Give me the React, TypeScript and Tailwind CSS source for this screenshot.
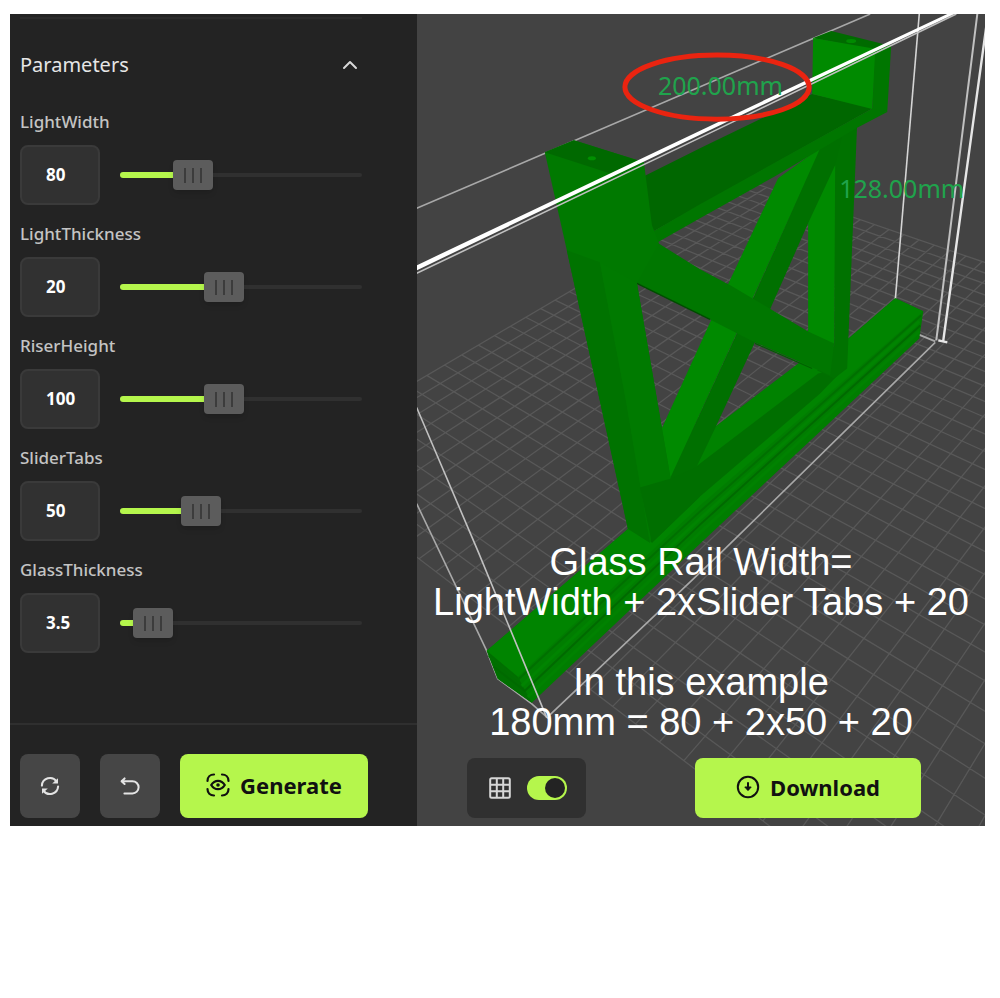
import { useState } from "react";
import { ChevronUp } from "lucide-react";

type Parameter = {
  name: string;
  value: number;
  min: number;
  max: number;
  step: number;
};

const defaultParameters: Parameter[] = [
  { name: "LightWidth", value: 80, min: 30, max: 220, step: 1 },
  { name: "LightThickness", value: 20, min: 10, max: 34, step: 1 },
  { name: "RiserHeight", value: 100, min: 50, max: 170, step: 1 },
  { name: "SliderTabs", value: 50, min: 20, max: 120, step: 1 },
  { name: "GlassThickness", value: 3.5, min: 3, max: 11, step: 0.5 },
];

const RefreshIcon = () => (
  <svg viewBox="0 0 20 20" className="size-5" fill="none" stroke="#e4e4e4" strokeWidth="2">
    <path d="M1.9 9.6A8.1 8.1 0 0 1 16.6 5.4" strokeLinecap="round" />
    <path d="M18.1 10.4A8.1 8.1 0 0 1 3.4 14.6" strokeLinecap="round" />
    <path d="M18 2.2V7.6H12.2Z" fill="#e4e4e4" stroke="none" />
    <path d="M2 17.8V12.4H7.8Z" fill="#e4e4e4" stroke="none" />
  </svg>
);

const UndoIcon = () => (
  <svg viewBox="0 0 20 20" className="size-5" fill="none" stroke="#e4e4e4" strokeWidth="2">
    <path d="M2 5.2H12.5A6.1 6.1 0 0 1 12.5 17.4H4.4" strokeLinecap="round" />
    <path d="M4.6 2.4L1.6 5.2L4.6 8" strokeLinecap="round" strokeLinejoin="round" />
  </svg>
);

const ScanEyeIcon = () => (
  <svg viewBox="0 0 24 24" className="size-6" fill="none" stroke="#111" strokeWidth="2.2" strokeLinecap="round">
    <path d="M1.5 8C1.5 4.2 4.2 1.5 8 1.5" />
    <path d="M16 1.5C19.8 1.5 22.5 4.2 22.5 8" />
    <path d="M22.5 16C22.5 19.8 19.8 22.5 16 22.5" />
    <path d="M8 22.5C4.2 22.5 1.5 19.8 1.5 16" />
    <path d="M5.2 12C8.6 6.4 15.4 6.4 18.8 12C15.4 17.6 8.6 17.6 5.2 12Z" strokeLinejoin="round" />
    <circle cx="12" cy="12" r="1.8" fill="#111" stroke="none" />
  </svg>
);

const GridIcon = () => (
  <svg viewBox="0 0 22 22" className="size-[22px]" fill="none" stroke="#d6d6d6" strokeWidth="2">
    <rect x="1.2" y="1.2" width="19.6" height="19.6" rx="1.5" />
    <path d="M7.8 1V21M14.2 1V21M1 7.8H21M1 14.2H21" />
  </svg>
);

const DownloadIcon = () => (
  <svg viewBox="0 0 24 24" className="size-6" fill="none" stroke="#111" strokeWidth="2">
    <circle cx="12" cy="12" r="10.2" />
    <path d="M12 8V14" strokeLinecap="round" />
    <path d="M8.8 12H15.2L12 15.6Z" fill="#111" strokeWidth="1" strokeLinejoin="round" />
  </svg>
);

const ParameterField = ({
  parameter,
  onChange,
}: {
  parameter: Parameter;
  onChange: (value: number) => void;
}) => {
  const { name, value, min, max, step } = parameter;
  const ratio = (value - min) / (max - min);

  return (
    <div>
      <label htmlFor={name} className="block text-[17px]/6 font-medium text-[#c4c4c4]">
        {name}
      </label>
      <div className="mt-[11px] flex items-center gap-5">
        <input
          id={name}
          type="text"
          inputMode="decimal"
          value={value}
          onChange={(e) => onChange(Number(e.target.value) || 0)}
          className="h-15 w-20 shrink-0 rounded-lg border-2 border-[#3a3a3a] bg-[#313131] pb-[2px] pl-6 text-[17px] font-bold text-white outline-none"
        />
        <div className="grid flex-1 items-center">
          <div className="col-start-1 row-start-1 h-1 rounded-full bg-[#303030]" />
          <div
            className="col-start-1 row-start-1 h-[6px] rounded-full bg-[#b5f64c]"
            style={{ width: `calc(20px + (100% - 40px) * ${ratio})` }}
          />
          <input
            type="range"
            aria-label={`${name} slider`}
            min={min}
            max={max}
            step={step}
            value={value}
            onChange={(e) => onChange(Number(e.target.value))}
            className="col-start-1 row-start-1 h-[30px] w-full appearance-none bg-transparent [&::-webkit-slider-thumb]:h-[30px] [&::-webkit-slider-thumb]:w-10 [&::-webkit-slider-thumb]:appearance-none [&::-webkit-slider-thumb]:rounded [&::-webkit-slider-thumb]:bg-[#5c5c5c] [&::-webkit-slider-thumb]:bg-[repeating-linear-gradient(90deg,#3c3c3c_0_2px,transparent_2px_8px)] [&::-webkit-slider-thumb]:bg-[length:18px_15px] [&::-webkit-slider-thumb]:bg-center [&::-webkit-slider-thumb]:bg-no-repeat [&::-webkit-slider-thumb]:shadow-md"
          />
        </div>
      </div>
    </div>
  );
};

// Build plate: a square grid seen in perspective, given by one corner
// and the two vanishing points its lines run to.
const corner = { x: 434.3, y: 370.7 };
const vanishRight = { x: 1635, y: -334 };
const vanishLeft = { x: -751, y: -334 };
const CELLS = 32;
const START = -0.1093;
const STEP_RIGHT = 0.01476;
const STEP_LEFT = -0.0112;

const project = (i: number, j: number) => {
  const a = START + i * STEP_RIGHT;
  const b = j * STEP_LEFT;
  const w = 1 + a + b;
  const x = (corner.x + a * vanishRight.x + b * vanishLeft.x) / w;
  const y = (corner.y + a * vanishRight.y + b * vanishLeft.y) / w;
  return `${x.toFixed(1)} ${y.toFixed(1)}`;
};

const gridPath = Array.from(
  { length: CELLS + 1 },
  (_, n) =>
    `M${project(n, 0)}L${project(n, CELLS)}M${project(0, n)}L${project(CELLS, n)}`
).join("");

const Scene = ({ showGrid }: { showGrid: boolean }) => (
  <svg
    viewBox="417 14 568 811"
    preserveAspectRatio="xMidYMid slice"
    className="absolute inset-0 size-full"
    role="img"
    aria-label="Model preview"
  >
    {showGrid && <path d={gridPath} stroke="#585858" strokeWidth="1.3" fill="none" />}

    {/* bounding box, far edges */}
    <g stroke="#a8a8a8" strokeWidth="1.6" fill="none">
      <path d="M417 208L870 14" />
      <path d="M919 14L895 300" stroke="#d5d5d5" />
      <path d="M417 503L487 650L498 678L532 703L549 718" />
      <path d="M918 334L935 341" strokeWidth="2" />
    </g>

    {/* base rail */}
    <path d="M487 650L895 298L923 311L919 338L820 431L700 543L532 702L498 678Z" fill="#007d00" />
    <path d="M487 650L895 298L923 311L700 505L518 676Z" fill="#008400" />
    <path d="M487 650L518 676L532 702L498 678Z" fill="#006f00" />
    <g fill="none">
      <path d="M921 315L700 511L518 679L489 655" stroke="#007000" strokeWidth="2" />
      <path d="M920 325L700 524L525 690L494 666" stroke="#006a00" strokeWidth="2" />
      <path d="M919 321L700 518L522 685" stroke="#008400" strokeWidth="3" />
      <path d="M919 331L700 532L528 696" stroke="#008200" strokeWidth="3" />
    </g>

    {/* bottom beam */}
    <path d="M714 427L802 360L825 372L700 480L660 500L690 450Z" fill="#008200" />
    <path d="M818 373L846 366L820 393L700 496L652 542L640 530L668 488L700 463Z" fill="#006f00" />

    {/* right post */}
    <path d="M808 215L836 160L834 345L808 333Z" fill="#008a00" />
    <path d="M820 142L857 122L847 368L834 378L817 370L834 345L835 165Z" fill="#007200" />

    {/* braces */}
    <path d="M778 178L822 146L737 332L700 413L670 482L660 432L710 322Z" fill="#008a00" />
    <path d="M820 148L842 136L835 165L808 223L770 309L715 428L691 478L668 492L670 478L700 413L753 298Z" fill="#007000" />
    <path d="M650 238L660 244L700 269L732 286L808 331L834 343L830 375L817 369L755 342L710 319L636 283Z" fill="#007700" />
    <path d="M637 283L710 319" stroke="#004d00" strokeWidth="1.5" />
    <path d="M755 343L812 368" stroke="#006100" strokeWidth="1.2" />

    {/* top beam and head block */}
    <path d="M640 178L700 148L812 94L873 108L700 205L650 233Z" fill="#006700" />
    <path d="M650 233L700 204L873 108L887 112L856 128L775 176L700 218L656 243Z" fill="#007600" />
    <path d="M813 38L831 31L891 46L875 50Z" fill="#006b00" />
    <path d="M813 38L876 49L872 109L812 94Z" fill="#008a00" />
    <path d="M875 49L891 45L887 112L872 109Z" fill="#007600" />
    <ellipse cx="851" cy="41" rx="5" ry="2" fill="#008a00" />

    {/* left post */}
    <path d="M545 152L574 140L644 162L652 225L659 243L637 283L671 480L650 542L628 528L567 250Z" fill="#007900" />
    <path d="M567 250L600 262L626 400L650 542L628 528Z" fill="#007300" />
    <path d="M600 262L637 283L671 480L664 505L650 542L626 400Z" fill="#007a00" />
    <path d="M640 487L671 478L700 465L700 496L652 542Z" fill="#006f00" />
    <path d="M545 152L574 140L644 162L616 175Z" fill="#006900" />
    <ellipse cx="592" cy="158" rx="4" ry="2" fill="#009000" />

    {/* bounding box, near edges */}
    <g stroke="#c0c0c0" strokeWidth="1.6" fill="none">
      <path d="M417 407L478 550L547 717" />
      <path d="M935 342L720 553L549 715" stroke="#a8a8a8" />
      <path d="M977 14L936 340" strokeWidth="2" />
      <path d="M986 26L943 340M938 340L947 342" stroke="#e6e6e6" strokeWidth="2.4" />
      <path d="M417 273L720 128L956 14" />
    </g>
    <path d="M417 265L720 121L947 14H954L720 125L417 270Z" fill="#fff" />

    {/* dimensions */}
    <g fontFamily='"Noto Sans", sans-serif' fontSize="25" fill="#20a34c">
      <text x="658" y="95">200.00mm</text>
      <text x="839" y="198">128.00mm</text>
    </g>
    <ellipse cx="717" cy="87" rx="92" ry="32" fill="none" stroke="#ea2410" strokeWidth="5" />
  </svg>
);

const App = () => {
  const [parameters, setParameters] = useState(defaultParameters);
  const [open, setOpen] = useState(true);
  const [showGrid, setShowGrid] = useState(true);

  const updateParameter = (name: string, value: number) =>
    setParameters((prev) =>
      prev.map((p) => (p.name === name ? { ...p, value } : p))
    );

  return (
    <div className="min-h-screen bg-white pt-[14px] pr-[15px] pl-[10px] font-['Noto_Sans',sans-serif]">
      <main className="grid grid-cols-[407fr_568fr]">
        {/* Sidebar */}
        <aside className="flex flex-col bg-[#232323]">
          <section className="flex-1 pt-[3px] pr-[55px] pb-[70px] pl-[10px]">
            <hr className="border-t-2 border-[#2b2b2b]" />
            <button
              type="button"
              onClick={() => setOpen(!open)}
              className="mt-8 flex w-full items-center justify-between text-left text-xl/7 text-[#e6e6e6]"
            >
              Parameters
              <ChevronUp className="size-6 text-[#d8d8d8]" />
            </button>
            {open && (
              <div className="mt-[31px] flex flex-col gap-[17px]">
                {parameters.map((parameter) => (
                  <ParameterField
                    key={parameter.name}
                    parameter={parameter}
                    onChange={(value) => updateParameter(parameter.name, value)}
                  />
                ))}
              </div>
            )}
          </section>

          <footer className="flex gap-5 border-t-2 border-[#2f2f2f] pt-[29px] pr-[49px] pb-2 pl-[10px]">
            <button
              type="button"
              aria-label="Reset"
              className="flex h-16 w-15 items-center justify-center rounded-lg bg-[#464646]"
            >
              <RefreshIcon />
            </button>
            <button
              type="button"
              aria-label="Undo"
              className="flex h-16 w-15 items-center justify-center rounded-lg bg-[#464646]"
            >
              <UndoIcon />
            </button>
            <button
              type="button"
              className="flex h-16 flex-1 items-center justify-center gap-[10px] rounded-lg bg-[#b5f64c] pb-[2px] text-[22px] font-bold text-[#111]"
            >
              <ScanEyeIcon />
              Generate
            </button>
          </footer>
        </aside>

        {/* Viewer */}
        <section className="relative flex flex-col justify-end overflow-hidden bg-[#434343]">
          <Scene showGrid={showGrid} />

          <p className="relative text-center font-['Liberation_Sans',Arial,sans-serif] text-[38px]/10 whitespace-nowrap text-white">
            Glass Rail Width=
            <br />
            LightWidth + 2xSlider Tabs + 20
            <br />
            <br />
            In this example
            <br />
            180mm = 80 + 2x50 + 20
          </p>

          <div className="relative mt-4 flex justify-between pr-16 pb-2 pl-[50px]">
            <label className="flex h-15 items-center gap-4 rounded-lg bg-[#303030] pr-[19px] pl-[22px]">
              <GridIcon />
              <input
                type="checkbox"
                aria-label="Show grid"
                checked={showGrid}
                onChange={(e) => setShowGrid(e.target.checked)}
                className="h-6 w-10 appearance-none rounded-full bg-[#5c5c5c] p-[2px] before:block before:size-5 before:rounded-full before:bg-[#232323] checked:bg-[#b5f64c] checked:before:ml-auto"
              />
            </label>
            <button
              type="button"
              className="flex h-15 w-[226px] items-center justify-center gap-[10px] rounded-lg bg-[#b5f64c] pb-[2px] text-[22px] font-bold text-[#111]"
            >
              <DownloadIcon />
              Download
            </button>
          </div>
        </section>
      </main>
    </div>
  );
};

export default App;
